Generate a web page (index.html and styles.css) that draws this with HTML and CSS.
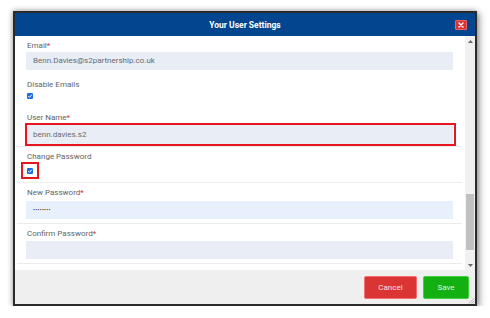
FILE: index.html
```html
<!DOCTYPE html>
<html lang="en">
<head>
<meta charset="utf-8">
<title>Your User Settings</title>
<link rel="stylesheet" href="styles.css">
</head>
<body>
<div class="dialog">
  <div class="header">
    <span></span>
    <div class="title">Your User Settings</div>
    <button class="close" aria-label="Close">
      <svg width="6" height="6" viewBox="0 0 6 6"><path d="M1 1L5 5M5 1L1 5" stroke="#fff" stroke-width="1.4" stroke-linecap="round"/></svg>
    </button>
  </div>
  <div class="body">
    <div class="content">
      <div class="group first">
        <div class="label">Email<span class="req">*</span></div>
        <div class="input">Benn.Davies@s2partnership.co.uk</div>
        <div class="label mt10">Disable Emails</div>
        <div class="cbrow"><span class="cb"><svg width="6" height="6" viewBox="0 0 6 6"><path d="M1.3 3.1L2.5 4.3L4.8 1.7" fill="none" stroke="#fff" stroke-width="1"/></svg></span></div>
        <div class="label mt15">User Name<span class="req">*</span></div>
        <div class="marked">
          <div class="input tall">benn.davies.s2</div>
        </div>
      </div>
      <div class="group g2">
        <div class="label">Change Password</div>
        <span class="cbmark"><span class="cb"><svg width="6" height="6" viewBox="0 0 6 6"><path d="M1.3 3.1L2.5 4.3L4.8 1.7" fill="none" stroke="#fff" stroke-width="1"/></svg></span></span>
      </div>
      <div class="group g3">
        <div class="label">New Password<span class="req">*</span></div>
        <div class="input pw">&bull;&bull;&bull;&bull;&bull;&bull;&bull;&bull;</div>
      </div>
      <div class="group g4">
        <div class="label">Confirm Password<span class="req">*</span></div>
        <div class="input"></div>
      </div>
    </div>
    <div class="scrollbar">
      <div class="arrow"><svg width="5" height="3" viewBox="0 0 5 3"><path d="M0 3L2.5 0L5 3Z" fill="#666"/></svg></div>
      <div class="track"><div class="thumb"></div></div>
      <div class="arrow"><svg width="5" height="3" viewBox="0 0 5 3"><path d="M0 0L2.5 3L5 0Z" fill="#666"/></svg></div>
    </div>
  </div>
  <div class="footer">
    <button class="btn cancel">Cancel</button>
    <button class="btn save">Save</button>
    <svg class="grip" width="7" height="7" viewBox="0 0 7 7"><path d="M6.5 1L1 6.5M6.5 3.5L3.5 6.5M6.5 5.5L5.5 6.5" stroke="#999" stroke-width="0.7"/></svg>
  </div>
</div>
</body>
</html>
```
FILE: styles.css
```css
* { box-sizing: border-box; }
html, body { margin: 0; background: #fff; }
body {
  padding: 11px 0 0 13px;
  font-family: Roboto, "Liberation Sans", Arial, sans-serif;
  font-size: 8px;
  color: #666;
}
.dialog {
  position: relative;
  width: 464px;
  height: 295px;
  border: 2px solid #2b2b2b;
  box-shadow: 2px 2px 7px rgba(0,0,0,0.45), -1px -1px 5px rgba(0,0,0,0.18);
  display: flex;
  flex-direction: column;
  background: #fff;
}
.header {
  height: 23px;
  background: #03458e;
  display: grid;
  grid-template-columns: 1fr auto 1fr;
  align-items: center;
  padding: 0 8px;
}
.title {
  color: #fff;
  font-weight: bold;
  font-size: 8.5px;
}
.close {
  justify-self: end;
  width: 12px;
  height: 10px;
  padding: 0;
  border: 1px solid #f06060;
  border-radius: 1px;
  background: #d93236;
  display: flex;
  align-items: center;
  justify-content: center;
}
.close svg { display: block; }
.body {
  height: 234px;
  display: flex;
}
.content {
  flex: 1;
  overflow: hidden;
}
.group {
  margin: 0 3px 0 2px;
  padding: 0 9px 4px;
  border-bottom: 1px solid #ececec;
}
.group.first { padding-top: 5px; padding-bottom: 0px; }
.group.g2 { padding-top: 5px; padding-bottom: 3px; }
.group.g3 { padding-top: 5px; padding-bottom: 4px; }
.group.g4 { padding-top: 5px; padding-bottom: 4px; }
.label {
  line-height: 10px;
  height: 10px;
  padding-left: 1px;
  color: #636363;
}
.req { color: #e0262b; }
.mt10 { margin-top: 10px; }
.mt15 { margin-top: 14px; }
.input {
  margin-top: 1px;
  height: 18px;
  line-height: 18px;
  background: #e9eef6;
  padding-left: 7px;
  color: #6a6a6a;
}
.g3 .input { margin-top: 3px; background: #e8f0fd; }
.g4 .input { margin-top: 2px; }
.pw { font-size: 6px; letter-spacing: 0.2px; color: #333; }
.cbrow { margin-top: 3px; height: 6px; padding-left: 1px; }
.cb {
  display: block;
  width: 6px;
  height: 6px;
  background: #1a6fe0;
  border-radius: 1px;
}
.cb svg { display: block; }
.marked {
  position: relative;
  margin-top: 2px;
  padding-bottom: 2px;
}
.marked .input.tall { margin-top: 0; height: 19px; line-height: 19px; }
.marked::after {
  content: "";
  position: absolute;
  left: -1px;
  right: -3px;
  top: -2px;
  bottom: 0;
  border: 2px solid #e8141e;
}
.cbmark {
  display: inline-block;
  margin-left: -5px;
  border: 2px solid #e8141e;
  padding: 4px 4px 3px 4px;
  vertical-align: top;
}
.scrollbar {
  width: 10px;
  background: #f1f1f1;
  display: flex;
  flex-direction: column;
}
.arrow {
  height: 10px;
  display: flex;
  align-items: center;
  justify-content: center;
}
.arrow svg { display: block; }
.track { flex: 1; }
.thumb {
  margin-top: 148px;
  height: 56px;
  background: #c1c1c1;
  margin-left: 1px;
  margin-right: 1px;
}
.footer {
  position: relative;
  flex: 1;
  background: #efefef;
  display: flex;
  justify-content: flex-end;
  align-items: flex-start;
  padding: 6px 6px 0 0;
  gap: 6px;
}
.btn {
  height: 23px;
  border-radius: 2px;
  font-family: Roboto, "Liberation Sans", Arial, sans-serif;
  font-size: 8px;
  color: rgba(255,255,255,0.88);
  padding: 0;
}
.cancel { width: 53px; background: #db3435; border: 1px solid #f07070; }
.save { width: 46px; background: #12b010; border: 1px solid #40d040; }
.grip { position: absolute; right: 0; bottom: 0; }
```
